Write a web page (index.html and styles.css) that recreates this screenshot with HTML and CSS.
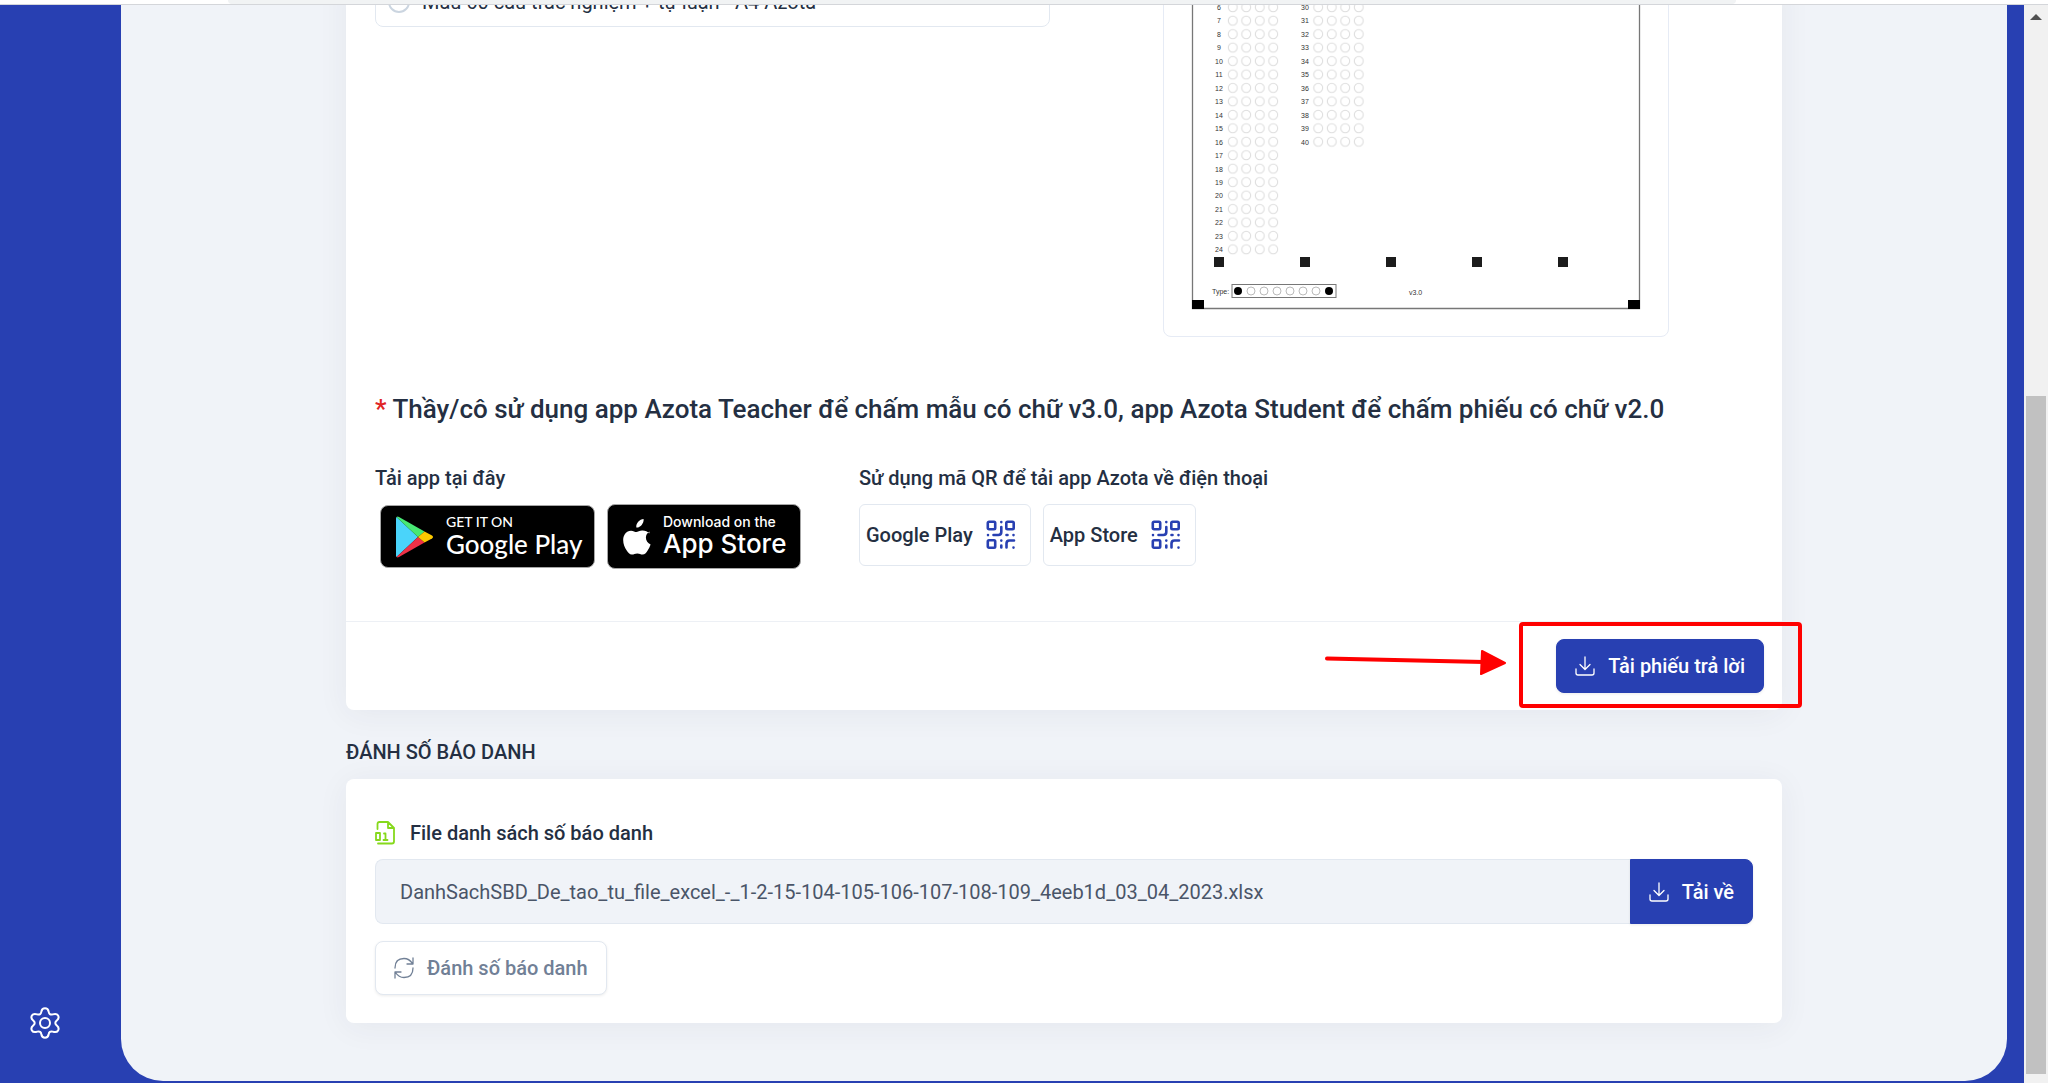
FILE: index.html
```html
<!DOCTYPE html>
<html lang="vi">
<head>
  <meta charset="UTF-8">
  <title>Azota</title>
  <link rel="stylesheet" href="styles.css">
</head>
<body>
  <div class="topbar"><div class="topbar-tab"></div></div>
  <div class="app">
    <nav class="sidebar">
      <a class="settings" href="#" aria-label="Cài đặt">
        <svg width="32" height="34" viewBox="0 0 32 34" fill="none" stroke="#fff" stroke-width="2" stroke-linejoin="round">
          <path d="M16 2.2c2.3 0 3.3 1.500 3.600 3.300 .3 2.400 1.700 3.600 4.100 2.900 2.300-.8 4.300-.7 5.400 1.200 1.100 2 .3 3.600-1.300 4.900-2 1.600-2 3.400 0 5 1.600 1.300 2.400 2.900 1.300 4.900-1.100 1.900-3.100 2-5.400 1.200-2.400-.7-3.800.5-4.100 2.900-.3 1.800-1.300 3.300-3.600 3.300s-3.300-1.500-3.600-3.300c-.3-2.400-1.700-3.600-4.100-2.900-2.300.8-4.300.7-5.400-1.200-1.100-2-.3-3.600 1.300-4.900 2-1.600 2-3.400 0-5-1.600-1.300-2.400-2.900-1.300-4.900 1.100-1.900 3.100-2 5.400-1.200 2.400.7 3.800-.5 4.100-2.900.3-1.800 1.300-3.300 3.600-3.300z"/>
          <circle cx="16" cy="17" r="5"/>
        </svg>
      </a>
    </nav>

    <main class="main">
      <div class="content">
        <section class="card">
          <div class="card-body">
            <div class="templates">
              <label class="option">
                <input type="radio" name="template">
                <span>Mẫu 60 câu trắc nghiệm + tự luận - A4 Azota</span>
              </label>
              <div class="preview">
                <svg class="sheet" viewBox="0 0 450 306" font-family="Liberation Sans, sans-serif" font-size="7">
                  <defs>
                    <pattern id="bubbles" width="13.5" height="13.45" patternUnits="userSpaceOnUse">
                      <circle cx="6.750" cy="6.720" r="4.500" fill="none" stroke="#dcdcdc"/>
                    </pattern>
                  </defs>
                  <path d="M1.500 0V304.500H448.500V0" fill="none" stroke="#777" stroke-width="1.300"/>
                  <g transform="translate(35 -3.500)"><rect width="54" height="255.550" fill="url(#bubbles)"/></g>
                  <g transform="translate(120.500 -3.500)"><rect width="54" height="147.950" fill="url(#bubbles)"/></g>
                  <g text-anchor="middle" fill="#333">
                    <text x="28" y="6">6</text><text x="28" y="19">7</text><text x="28" y="33">8</text>
                    <text x="28" y="46">9</text><text x="28" y="60">10</text><text x="28" y="73">11</text>
                    <text x="28" y="87">12</text><text x="28" y="100">13</text><text x="28" y="114">14</text>
                    <text x="28" y="127">15</text><text x="28" y="141">16</text><text x="28" y="154">17</text>
                    <text x="28" y="168">18</text><text x="28" y="181">19</text><text x="28" y="194">20</text>
                    <text x="28" y="208">21</text><text x="28" y="221">22</text><text x="28" y="235">23</text>
                    <text x="28" y="248">24</text>
                    <text x="114" y="6">30</text><text x="114" y="19">31</text><text x="114" y="33">32</text>
                    <text x="114" y="46">33</text><text x="114" y="60">34</text><text x="114" y="73">35</text>
                    <text x="114" y="87">36</text><text x="114" y="100">37</text><text x="114" y="114">38</text>
                    <text x="114" y="127">39</text><text x="114" y="141">40</text>
                  </g>
                  <g fill="#1c1c1c">
                    <rect x="23" y="253" width="10" height="10"/>
                    <rect x="109" y="253" width="10" height="10"/>
                    <rect x="195" y="253" width="10" height="10"/>
                    <rect x="281" y="253" width="10" height="10"/>
                    <rect x="367" y="253" width="10" height="10"/>
                  </g>
                  <text x="21" y="290" font-size="7" fill="#333">Type:</text>
                  <text x="218" y="291" font-size="7" fill="#333">v3.0</text>
                  <rect x="41" y="280.500" width="104" height="13" fill="#fff" stroke="#777"/>
                  <g fill="none" stroke="#aaa" stroke-width=".8">
                    <circle cx="60" cy="287" r="4"/><circle cx="73" cy="287" r="4"/><circle cx="86" cy="287" r="4"/>
                    <circle cx="99" cy="287" r="4"/><circle cx="112" cy="287" r="4"/><circle cx="125" cy="287" r="4"/>
                  </g>
                  <circle cx="47" cy="287" r="4"/><circle cx="138" cy="287" r="4"/>
                  <rect x="1" y="296" width="12" height="9"/>
                  <rect x="437" y="296" width="12" height="9"/>
                </svg>
              </div>
            </div>

            <h2 class="note"><span class="star">*</span> Thầy/cô sử dụng app Azota Teacher để chấm mẫu có chữ v3.0, app Azota Student để chấm phiếu có chữ v2.0</h2>

            <div class="apps">
              <div class="apps-col">
                <p>Tải app tại đây</p>
                <div class="stores">
                  <a class="store google" href="#">
                    <svg width="38" height="42" viewBox="0 0 38 42">
                      <path fill="#4ad4fa" d="M.5 1Q0 1.500 0 2.500V39.500Q0 40.500.5 41L22 21z"/>
                      <path fill="#48e874" d="M.5 1Q1.500.2 3 1L28.500 15.500 22 21z"/>
                      <path fill="#ee3147" d="M.5 41Q1.500 41.800 3 41L28.500 26.500 22 21z"/>
                      <path fill="#fdc900" d="M28.500 15.500L36 19.500Q38 21 36 22.500L28.500 26.500 22 21z"/>
                    </svg>
                    <span class="store-text"><small>GET IT ON</small><b>Google Play</b></span>
                  </a>
                  <a class="store apple" href="#">
                    <svg width="30" height="36" viewBox="0 0 30 36" fill="#fff">
                      <path d="M21.600 0c.3 2.200-.6 4.300-1.900 5.900-1.300 1.600-3.400 2.800-5.400 2.600-.3-2.100.7-4.300 1.900-5.700C17.500 1.200 19.800.1 21.600 0z"/>
                      <path d="M28.600 12.400c-2.300 1.400-3.700 3.500-3.700 6.200 0 3.100 1.900 5.700 4.700 6.800-.7 2.200-1.800 4.300-3.100 6.300-1.300 1.900-2.700 3.900-4.900 3.900-2.100 0-2.800-1.200-5.300-1.200s-3.300 1.200-5.400 1.200c-2.200.1-3.800-2.100-5.200-4C2.800 27.600.7 20.600 3.500 15.700c1.400-2.400 3.900-4 6.600-4 2.100 0 4 1.400 5.300 1.400 1.200 0 3.600-1.700 6.100-1.500 2.800.1 5.200 1.100 6.700 3z" transform="translate(-1 0)"/>
                    </svg>
                    <span class="store-text"><small>Download on the</small><b>App Store</b></span>
                  </a>
                </div>
              </div>
              <div class="apps-col">
                <p>Sử dụng mã QR để tải app Azota về điện thoại</p>
                <svg class="hidden">
                  <symbol id="qr" viewBox="0 0 30 30">
                    <g fill="none" stroke="#2840b2" stroke-width="2.600" stroke-linecap="round">
                      <rect x="1.800" y="1.800" width="7.400" height="7.400" rx="1.200"/>
                      <rect x="20.300" y="1.800" width="7.400" height="7.400" rx="1.200"/>
                      <rect x="1.800" y="20.300" width="7.400" height="7.400" rx="1.200"/>
                      <path d="M15.300 7v5q0 3-3 3H7.500M20.500 27.500v-4q0-3 3-3h4.500"/>
                      <path d="M15.300 2v.1M2 15v.1M20.500 15h1M27.500 15v.1M15.300 20.500v.1M15.300 25.500v2M27.500 27.500v.1"/>
                    </g>
                  </symbol>
                </svg>
                <div class="codes">
                  <button type="button" class="code">Google Play <svg width="30" height="30"><use href="#qr"/></svg></button>
                  <button type="button" class="code">App Store <svg width="30" height="30"><use href="#qr"/></svg></button>
                </div>
              </div>
            </div>
          </div>

          <div class="card-footer">
            <svg class="arrow" width="184" height="30" viewBox="0 0 184 30">
              <path d="M3 11.500L160 15" stroke="#f00" stroke-width="4" stroke-linecap="round"/>
              <path d="M158 4L181 16 157 27z" fill="#f00" stroke="#f00" stroke-width="2" stroke-linejoin="round"/>
            </svg>
            <div class="highlight"></div>
            <button type="button" class="btn btn-primary">
              <svg width="20" height="20" viewBox="0 0 20 20" fill="none" stroke="#fff" stroke-width="1.300" stroke-linecap="round" stroke-linejoin="round"><path d="M10 1v12M5 8.500l5 5 5-5M1 13v4q0 2 2 2h14q2 0 2-2v-4"/></svg>
              Tải phiếu trả lời
            </button>
          </div>
        </section>

        <h3 class="section-title">ĐÁNH SỐ BÁO DANH</h3>

        <section class="card candidates">
          <label class="file-label" for="file">
            <svg width="20" height="24" viewBox="0 0 20 24" fill="none" stroke="#86d91c" stroke-width="1.800" stroke-linecap="round" stroke-linejoin="round">
              <path d="M2.500 8V3q0-2 2-2H13l6 6v13.500q0 2-2 2H3M13 1v6h6"/>
              <path d="M1 12h4v7H1zM9 12.500h1.500V19M8.500 19h4"/>
            </svg>
            File danh sách số báo danh
          </label>
          <div class="file-row">
            <input id="file" type="text" readonly value="DanhSachSBD_De_tao_tu_file_excel_-_1-2-15-104-105-106-107-108-109_4eeb1d_03_04_2023.xlsx">
            <button type="button" class="btn btn-primary">
              <svg width="20" height="20" viewBox="0 0 20 20" fill="none" stroke="#fff" stroke-width="1.300" stroke-linecap="round" stroke-linejoin="round"><path d="M10 1v12M5 8.500l5 5 5-5M1 13v4q0 2 2 2h14q2 0 2-2v-4"/></svg>
              Tải về
            </button>
          </div>
          <button type="button" class="btn btn-outline">
            <svg width="20" height="22" viewBox="0 0 20 22" fill="none" stroke="#718096" stroke-width="1.300" stroke-linecap="round" stroke-linejoin="round"><path d="M19 1v6h-6M1 21v-6h6M1 11C1 4 5 1.500 10 1.500c4 0 6.500 2 8.500 5M19 11c0 7-4 9.500-9 9.500-4 0-6.500-2-8.500-5"/></svg>
            Đánh số báo danh
          </button>
        </section>
      </div>
    </main>

    <div class="scrollbar">
      <div class="scroll-arrow"></div>
      <div class="scroll-thumb"></div>
    </div>
  </div>
</body>
</html>
```
FILE: styles.css
```css
* {
  box-sizing: border-box;
}
body {
  display: flex;
  flex-direction: column;
  height: 100vh;
  margin: 0;
  overflow: hidden;
  font-family: Roboto, sans-serif;
  font-size: 20px;
  font-weight: 500;
  color: #242f42;
}
p, h2, h3 {
  margin: 0;
}
svg {
  flex: none;
}
a {
  text-decoration: none;
}
button {
  font: inherit;
  cursor: pointer;
}
.hidden {
  position: absolute;
  width: 0;
  height: 0;
}
.topbar {
  height: 5px;
  padding: 0 312px 0 228px;
  border-bottom: 1px solid #d4d6da;
}
.topbar-tab {
  height: 4px;
  background: #f1f3f4;
  border-radius: 0 0 12px 12px;
}
.app {
  flex: 1;
  display: flex;
  min-height: 0;
  background: #2840b2;
}
.sidebar {
  width: 121px;
  display: flex;
  flex-direction: column;
  justify-content: flex-end;
  align-items: flex-start;
  padding: 0 29px 43px;
}
.settings {
  display: flex;
}

/* the page is scrolled to its end, so the content hangs from the bottom */
.main {
  flex: 1;
  display: flex;
  flex-direction: column;
  justify-content: flex-end;
  min-width: 0;
  margin: 0 17px 2px 0;
  padding: 0 40px 58px;
  overflow: hidden;
  background: #f0f3f8;
  border-radius: 0 0 42px 42px;
}
.content {
  width: 100%;
  max-width: 1436px;
  margin: 0 auto;
}
.card {
  background: #fff;
  border-radius: 8px;
  box-shadow: 0 4px 32px rgba(45, 55, 72, 0.06);
}
.card-body {
  padding: 0 29px 52px;
}
.templates {
  display: flex;
  align-items: flex-start;
  gap: 113px;
}
.option {
  flex: 1;
  display: flex;
  align-items: center;
  gap: 12px;
  height: 50px;
  padding: 0 12px;
  border: 1px solid #e2e8f0;
  border-radius: 8px;
  font-weight: 400;
}
.option input {
  appearance: none;
  width: 22px;
  height: 22px;
  margin: 0;
  border: 2px solid #cbd5e0;
  border-radius: 50%;
}
.preview {
  width: 506px;
  margin-right: 84px;
  padding: 26px 27px;
  border: 1px solid #e6ebf5;
  border-radius: 8px;
}
.sheet {
  display: block;
  width: 100%;
}
.note {
  margin: 54px 0 37px;
  font-size: 26px;
  font-weight: 500;
  line-height: 36px;
}
.star {
  color: #e02424;
}
.apps {
  display: flex;
  gap: 58px;
}
.apps p {
  margin-bottom: 12px;
  line-height: 28px;
}
.stores,
.codes {
  display: flex;
  align-items: center;
  gap: 12px;
}
.stores {
  padding-left: 5px;
}
.store {
  display: flex;
  align-items: center;
  height: 65px;
  background: #000;
  border: 1px solid #a6a6a6;
  border-radius: 8px;
  color: #fff;
}
.google {
  width: 215px;
  height: 63px;
  gap: 12px;
  padding-left: 15px;
  font-family: Lato, sans-serif;
}
.apple {
  width: 194px;
  gap: 11px;
  padding-left: 14px;
  font-family: Inter, sans-serif;
}
.store-text {
  display: flex;
  flex-direction: column;
  white-space: nowrap;
}
.store small {
  font-size: 14px;
  line-height: 14px;
}
.store b {
  font-size: 26px;
  font-weight: 500;
  line-height: 30px;
}
.code {
  display: flex;
  align-items: center;
  gap: 13px;
  height: 62px;
  padding: 0 14px 0 6px;
  background: #fff;
  border: 1px solid #e2e8f0;
  border-radius: 6px;
  color: inherit;
}
.card-footer {
  position: relative;
  display: flex;
  justify-content: flex-end;
  padding: 17px 18px 17px 17px;
  border-top: 1px solid #edf0f5;
}
.highlight {
  position: absolute;
  inset: 0 -20px 2px auto;
  width: 283px;
  border: 4px solid #f00;
  border-radius: 4px;
  pointer-events: none;
}
.arrow {
  position: absolute;
  top: 25px;
  right: 274px;
}
.btn {
  display: flex;
  align-items: center;
  gap: 13px;
  height: 54px;
  padding: 0 18px;
  border: 1px solid #2840b2;
  border-radius: 8px;
  box-shadow: 0 1px 3px rgba(0, 0, 0, 0.08);
  white-space: nowrap;
}
.btn-primary {
  background: #2840b2;
  color: #fff;
}
.btn-outline {
  background: #fff;
  border-color: #e2e8f0;
  color: #718096;
}
.section-title {
  margin: 27px 0 12px;
  font-size: 20px;
  font-weight: 500;
  line-height: 30px;
}
.candidates {
  padding: 38px 29px 28px;
}
.file-label {
  display: flex;
  align-items: center;
  gap: 15px;
  margin-bottom: 10px;
  line-height: 32px;
}
.file-row {
  display: flex;
  margin-bottom: 17px;
}
.file-row input {
  flex: 1;
  min-width: 0;
  height: 65px;
  padding: 0 24px;
  background: #f0f3f8;
  border: 1px solid #e2e8f0;
  border-right: 0;
  border-radius: 8px 0 0 8px;
  font: inherit;
  font-weight: 400;
  color: #4a5568;
}
.file-row .btn {
  height: 65px;
  border-radius: 0 8px 8px 0;
}
.scrollbar {
  width: 24px;
  display: flex;
  flex-direction: column;
  align-items: center;
  padding: 9px 2px;
  background: #f1f1f1;
}
.scroll-arrow {
  border: 6px solid transparent;
  border-top: 0;
  border-bottom-color: #505050;
}
.scroll-thumb {
  width: 100%;
  height: 64%;
  margin-top: auto;
  background: #c1c1c1;
}
```
